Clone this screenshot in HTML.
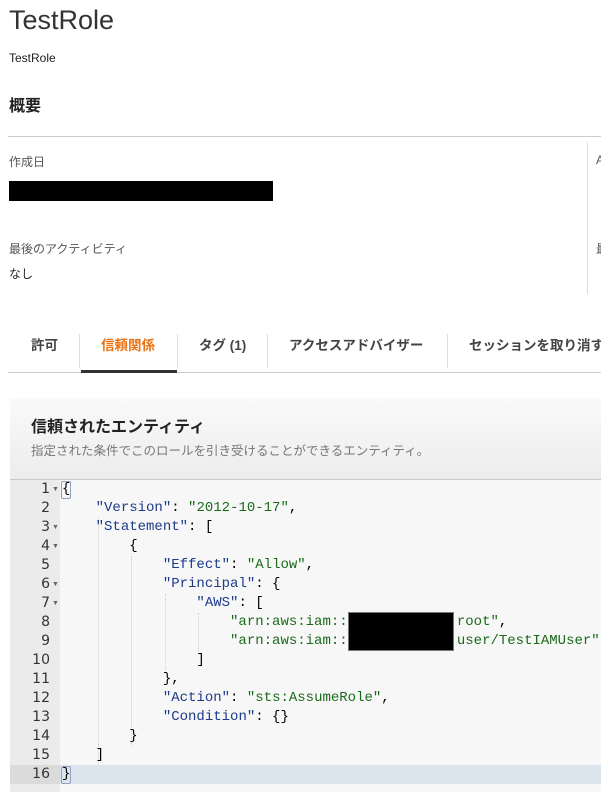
<!DOCTYPE html>
<html><head><meta charset="utf-8"><style>
*{margin:0;padding:0;box-sizing:border-box}
body{width:601px;height:792px;overflow:hidden;background:#fff;font-family:"Liberation Sans","Noto Sans CJK JP",sans-serif;color:#16191f;position:relative}
.a{position:absolute;white-space:nowrap}
.tab{position:absolute;white-space:nowrap;top:334px;font-size:13.5px;font-weight:bold;color:#444}
.sep{position:absolute;top:334px;width:1px;height:34px;background:#ddd}
.code{position:absolute;left:10px;top:480px;width:591px;height:312px;background:#f7f7f7}
.gut{position:absolute;left:0;top:0;width:50px;height:312px;background:#ebebeb}
.ln{position:absolute;left:0;width:40px;text-align:right;font:14px/19px "DejaVu Sans","Liberation Sans",sans-serif;color:#333}
.cl{position:absolute;left:52px;font:14px/19px "Liberation Mono",monospace;color:#000;white-space:pre}
.k{color:#1c3a8a}.s{color:#1a6a1a}
.fold{position:absolute;left:42px;font-size:7px;color:#666}
.guide{position:absolute;border-left:1px dotted #ccc}
</style></head><body>
<div class="a" style="left:9px;top:5px;font-size:27px;color:#333">TestRole</div>
<div class="a" style="left:9px;top:51px;font-size:12px;color:#222">TestRole</div>
<div class="a" style="left:9px;top:92px;font-size:16px;font-weight:bold;color:#222">概要</div>
<div class="a" style="left:8px;top:136px;width:593px;height:1px;background:#ccc"></div>
<div class="a" style="left:9px;top:153px;font-size:12px;color:#555">作成日</div>
<div class="a" style="left:9px;top:181px;width:264px;height:20px;background:#000"></div>
<div class="a" style="left:9px;top:240px;font-size:12px;color:#555">最後のアクティビティ</div>
<div class="a" style="left:9px;top:265px;font-size:12px;color:#222">なし</div>
<div class="a" style="left:587px;top:142px;width:1px;height:152px;background:#ddd"></div>
<div class="a" style="left:596px;top:153px;font-size:12px;color:#555">A</div>
<div class="a" style="left:596px;top:240px;font-size:12px;color:#555">最</div>

<div class="tab" style="left:31px">許可</div>
<div class="sep" style="left:79px"></div>
<div class="tab" style="left:101px;color:#ec7211">信頼関係</div>
<div class="sep" style="left:177px"></div>
<div class="tab" style="left:199px">タグ (1)</div>
<div class="sep" style="left:267px"></div>
<div class="tab" style="left:289px">アクセスアドバイザー</div>
<div class="sep" style="left:447px"></div>
<div class="tab" style="left:469px">セッションを取り消す</div>
<div class="a" style="left:8px;top:372px;width:593px;height:1px;background:#ccc"></div>
<div class="a" style="left:81px;top:370px;width:96px;height:3px;background:#333"></div>

<div class="a" style="left:10px;top:398px;width:591px;height:82px;background:linear-gradient(#fafafa,#ececec);border-bottom:1px solid #c8c8c8"></div>
<div class="a" style="left:31px;top:413px;font-size:16px;font-weight:bold;color:#222">信頼されたエンティティ</div>
<div class="a" style="left:31px;top:440px;font-size:12.5px;color:#777">指定された条件でこのロールを引き受けることができるエンティティ。</div>

<div class="code">
<div class="gut"></div>
<div class="a" style="left:0;top:285px;width:50px;height:19px;background:#dbdbdb"></div>
<div class="a" style="left:50px;top:285px;width:541px;height:19px;background:#dce4ed"></div>
<div class="guide" style="left:88px;top:38px;height:247px"></div>
<div class="guide" style="left:121px;top:76px;height:190px"></div>
<div class="guide" style="left:155px;top:114px;height:76px"></div>
<div class="guide" style="left:188px;top:133px;height:38px"></div>
<div class="ln" style="top:0">1</div><div class="ln" style="top:19px">2</div><div class="ln" style="top:38px">3</div><div class="ln" style="top:57px">4</div><div class="ln" style="top:76px">5</div><div class="ln" style="top:95px">6</div><div class="ln" style="top:114px">7</div><div class="ln" style="top:133px">8</div><div class="ln" style="top:152px">9</div><div class="ln" style="top:171px">10</div><div class="ln" style="top:190px">11</div><div class="ln" style="top:209px">12</div><div class="ln" style="top:228px">13</div><div class="ln" style="top:247px">14</div><div class="ln" style="top:266px">15</div><div class="ln" style="top:285px">16</div>
<div class="fold" style="top:6px">▼</div><div class="fold" style="top:44px">▼</div><div class="fold" style="top:63px">▼</div><div class="fold" style="top:101px">▼</div><div class="fold" style="top:120px">▼</div>
<div class="a" style="left:51px;top:1px;width:10px;height:18px;border:1px solid #8fa0c0;border-radius:2px"></div>
<div class="a" style="left:51px;top:286px;width:10px;height:18px;border:1px solid #8fa0c0;border-radius:2px"></div>
<div class="cl" style="top:0">{</div>
<div class="cl" style="top:19px">    <span class="k">"Version"</span>: <span class="s">"2012-10-17"</span>,</div>
<div class="cl" style="top:38px">    <span class="k">"Statement"</span>: [</div>
<div class="cl" style="top:57px">        {</div>
<div class="cl" style="top:76px">            <span class="k">"Effect"</span>: <span class="s">"Allow"</span>,</div>
<div class="cl" style="top:95px">            <span class="k">"Principal"</span>: {</div>
<div class="cl" style="top:114px">                <span class="k">"AWS"</span>: [</div>
<div class="cl" style="top:133px">                    <span class="s">"arn:aws:iam::            :root"</span>,</div>
<div class="cl" style="top:152px">                    <span class="s">"arn:aws:iam::            :user/TestIAMUser"</span></div>
<div class="cl" style="top:171px">                ]</div>
<div class="cl" style="top:190px">            },</div>
<div class="cl" style="top:209px">            <span class="k">"Action"</span>: <span class="s">"sts:AssumeRole"</span>,</div>
<div class="cl" style="top:228px">            <span class="k">"Condition"</span>: {}</div>
<div class="cl" style="top:247px">        }</div>
<div class="cl" style="top:266px">    ]</div>
<div class="cl" style="top:285px">}</div>
<div class="a" style="left:338px;top:132px;width:106px;height:39px;background:#000;border:1px solid #777"></div>
</div>
</body></html>
